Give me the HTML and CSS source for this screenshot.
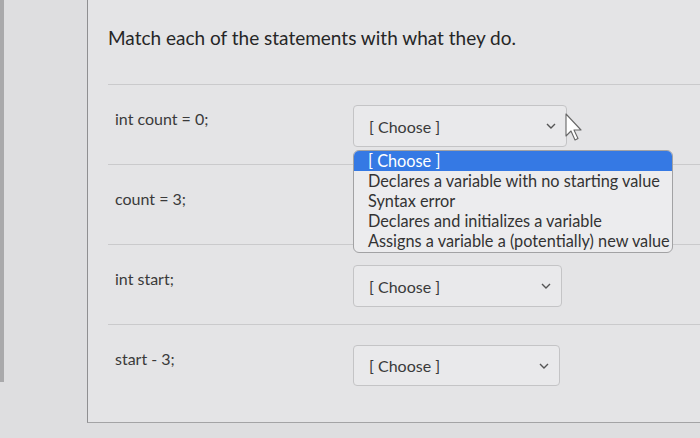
FILE: index.html
```html
<!DOCTYPE html>
<html lang="en">
<head>
    <meta charset="UTF-8">
    <meta name="viewport" content="width=device-width, initial-scale=1.0">
    <title>Quiz Question</title>
    <link rel="stylesheet" href="styles.css">
</head>
<body>
<div class="gutter"><div class="strip"></div></div>

<div class="card">
    <h1 class="question-title">Match each of the statements with what they do.</h1>

    <div class="answers">
        <div class="row">
            <div class="statement">int count = 0;</div>
            <div class="select-wrap">
                <div class="select">
                    <span>[ Choose ]</span>
                    <svg class="chevron" width="10" height="6" viewBox="0 0 10 6"><path d="M1 1l4 4 4-4" fill="none" stroke="#555" stroke-width="1.4"/></svg>
                </div>
                <svg class="cursor" width="18" height="30" viewBox="0 0 18 30">
                    <path d="M1 1v22l5-5 4 9 3-1.5-4-8.5h7z" fill="#fff" stroke="#666" stroke-width="1.1" stroke-linejoin="round"/>
                </svg>
                <ul class="dropdown">
                    <li class="active">[ Choose ]</li>
                    <li>Declares a variable with no starting value</li>
                    <li>Syntax error</li>
                    <li>Declares and initializes a variable</li>
                    <li>Assigns a variable a (potentially) new value</li>
                </ul>
            </div>
        </div>
        <div class="row">
            <div class="statement">count = 3;</div>
            <div class="select-wrap covered">
                <div class="select">
                    <span>[ Choose ]</span>
                    <svg class="chevron" width="10" height="6" viewBox="0 0 10 6"><path d="M1 1l4 4 4-4" fill="none" stroke="#555" stroke-width="1.4"/></svg>
                </div>
            </div>
        </div>
        <div class="row">
            <div class="statement">int start;</div>
            <div class="select-wrap">
                <div class="select">
                    <span>[ Choose ]</span>
                    <svg class="chevron" width="10" height="6" viewBox="0 0 10 6"><path d="M1 1l4 4 4-4" fill="none" stroke="#555" stroke-width="1.4"/></svg>
                </div>
            </div>
        </div>
        <div class="row">
            <div class="statement">start - 3;</div>
            <div class="select-wrap">
                <div class="select">
                    <span>[ Choose ]</span>
                    <svg class="chevron" width="10" height="6" viewBox="0 0 10 6"><path d="M1 1l4 4 4-4" fill="none" stroke="#555" stroke-width="1.4"/></svg>
                </div>
            </div>
        </div>
    </div>
</div>
</body>
</html>
```

FILE: styles.css
```css
body {
    margin: 0;
    height: 438px;
    overflow: hidden;
    display: flex;
    align-items: flex-start;
    background-color: #dedee0;
    font-family: Lato, "Open Sans", sans-serif;
    color: #333;
}
.gutter { width: 87px; height: 438px; flex-shrink: 0; }
.strip { width: 4px; height: 382px; background-color: #a9a9ab; }

.card {
    flex: 1;
    height: 422px;
    padding-left: 20px;
    background-color: #e4e4e6;
    border-left: 1px solid #8f8f91;
    border-bottom: 1px solid #a3a3a5;
}
.question-title {
    margin: 0 0 30px;
    padding-top: 24px;
    font-size: 19px;
    line-height: 28px;
    font-weight: 400;
    color: #262626;
}
.answers { padding-top: 2px; }

.row {
    display: flex;
    height: 79px;
    border-top: 1px solid #cacacc;
}
.statement {
    width: 245px;
    box-sizing: border-box;
    padding: 24px 0 0 7px;
    font-size: 16px;
    line-height: 20px;
    color: #3a3a3a;
}
.select-wrap { position: relative; margin-top: 20px; }
.select-wrap.covered { visibility: hidden; }
.select {
    display: flex;
    align-items: center;
    justify-content: space-between;
    box-sizing: border-box;
    width: 214px;
    height: 42px;
    padding: 0 10px 0 15px;
    border: 1px solid #c4c4c6;
    border-radius: 4px;
    background-color: #e9e9eb;
    font-size: 16px;
    color: #3a3a3a;
}
.row:nth-child(3) .select { width: 209px; }
.row:nth-child(4) .select { width: 207px; height: 41px; }

.cursor { position: absolute; left: 212px; top: 8px; z-index: 11; }

.dropdown {
    position: absolute;
    z-index: 10;
    top: 45px;
    left: 0;
    width: 320px;
    box-sizing: border-box;
    margin: 0;
    padding: 0 0 1px;
    list-style: none;
    background-color: #ececee;
    border: 1px solid #a2a2a4;
    border-radius: 6px;
    overflow: hidden;
    font-size: 16.3px;
    line-height: 20px;
    color: #333;
    white-space: nowrap;
}
.dropdown li { padding-left: 14px; }
.dropdown li.active { background-color: #3579e4; color: #fff; }
```
